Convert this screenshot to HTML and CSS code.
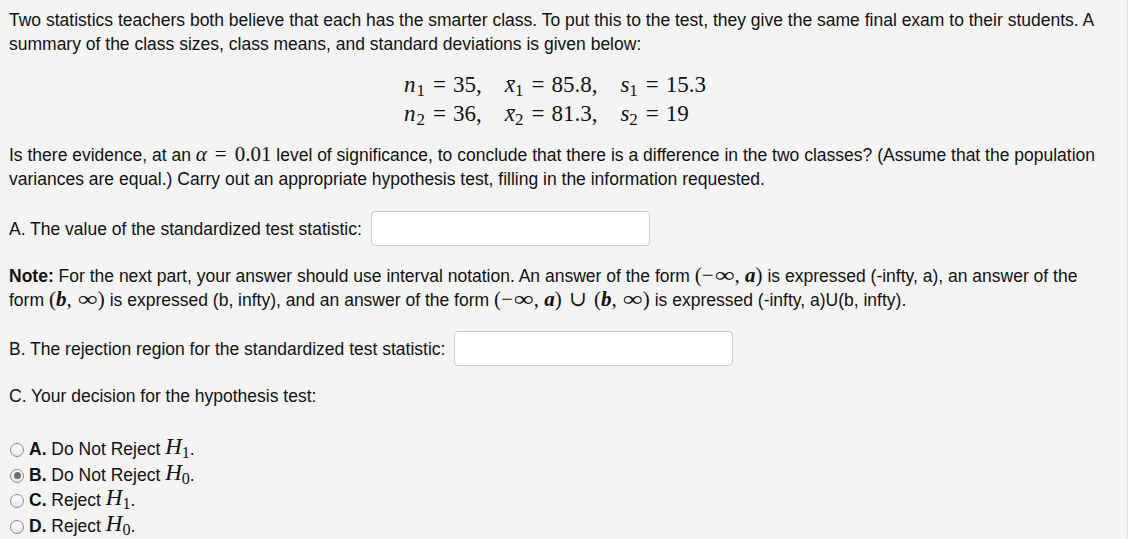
FILE: index.html
```html
<!DOCTYPE html>
<html>
<head>
<meta charset="utf-8">
<link rel="stylesheet" href="styles.css">
</head>
<body>
<div class="page">
  <p class="p1">Two statistics teachers both believe that each has the smarter class. To put this to the test, they give the same final exam to their students. A summary of the class sizes, class means, and standard deviations is given below:</p>
  <div class="display">
    <div class="block">
      <div class="mrow"><span class="mi n">n</span><sub>1</sub><span class="mo">=</span>35,<span class="sp"></span><span class="mi bar">x</span><sub>1</sub><span class="mo">=</span>85.8,<span class="sp"></span><span class="mi">s</span><sub>1</sub><span class="mo">=</span>15.3</div>
      <div class="mrow"><span class="mi n">n</span><sub>2</sub><span class="mo">=</span>36,<span class="sp"></span><span class="mi bar">x</span><sub>2</sub><span class="mo">=</span>81.3,<span class="sp"></span><span class="mi">s</span><sub>2</sub><span class="mo">=</span>19</div>
    </div>
  </div>
  <p class="p2">Is there evidence, at an <span class="m"><span class="mi">α</span><span class="mo">=</span>0.01</span> level of significance, to conclude that there is a difference in the two classes? (Assume that the population variances are equal.) Carry out an appropriate hypothesis test, filling in the information requested.</p>
  <div class="answer a-row">
    <span>A. The value of the standardized test statistic:</span>
    <span class="box"></span>
  </div>
  <p class="note"><b>Note:</b> For the next part, your answer should use interval notation. An answer of the form <span class="m">(−<span class="inf">∞</span>, <span class="mi b">a</span>)</span> is expressed (-infty, a), an answer of the form <span class="m">(<span class="mi b">b</span>, <span class="inf">∞</span>)</span> is expressed (b, infty), and an answer of the form <span class="m">(−<span class="inf">∞</span>, <span class="mi b">a</span>) <span class="cup">∪</span> (<span class="mi b">b</span>, <span class="inf">∞</span>)</span> is expressed (-infty, a)U(b, infty).</p>
  <div class="answer b-row">
    <span>B. The rejection region for the standardized test statistic:</span>
    <span class="box"></span>
  </div>
  <p class="c-row">C. Your decision for the hypothesis test:</p>
  <ul class="choices">
    <li><span class="radio"></span><b>A.</b>&nbsp;Do Not Reject <span class="m h"><span class="mi">H</span><sub>1</sub></span>.</li>
    <li><span class="radio on"></span><b>B.</b>&nbsp;Do Not Reject <span class="m h"><span class="mi">H</span><sub>0</sub></span>.</li>
    <li><span class="radio"></span><b>C.</b>&nbsp;Reject <span class="m h"><span class="mi">H</span><sub>1</sub></span>.</li>
    <li><span class="radio"></span><b>D.</b>&nbsp;Reject <span class="m h"><span class="mi">H</span><sub>0</sub></span>.</li>
  </ul>
</div>
</body>
</html>
```

FILE: styles.css
```css
html, body {
  margin: 0;
  padding: 0;
  background: #f4f4f4;
}
body {
  font-family: "Liberation Sans", Arial, sans-serif;
  font-size: 17.5px;
  color: #111;
  line-height: 24px;
}
.page {
  box-sizing: border-box;
  width: 1128px;
  height: 539px;
  padding: 8px 22px 0 9px;
  border-right: 1px solid #e2e2e2;
  overflow: hidden;
}
p { margin: 0; }
.display {
  margin-top: 14px;
  display: flex;
  justify-content: center;
  font-family: "Liberation Serif", "DejaVu Serif", serif;
  font-size: 23px;
}
.block {
  display: flex;
  flex-direction: column;
  align-items: flex-start;
  padding-right: 4px;
}
.mrow {
  height: 29px;
  line-height: 29px;
  white-space: nowrap;
}
.mi { font-style: italic; }
.mi.n { padding-right: 1px; }
.mi.b { font-style: italic; font-weight: bold; }
.bar { position: relative; }
.bar::before {
  content: "";
  position: absolute;
  left: 3px;
  right: 0;
  top: 8px;
  height: 1.3px;
  background: #111;
}
sub {
  font-size: 74%;
  vertical-align: -0.25em;
  line-height: 0;
  font-style: normal;
}
.mo { padding: 0 7px 0 8px; }
.sp { display: inline-block; width: 23px; }
.m {
  font-family: "Liberation Serif", "DejaVu Serif", serif;
  font-size: 21px;
  line-height: 0;
}
.m .mo { padding: 0 8px; }
.inf {
  display: inline-block;
  transform: scaleX(1.35);
  margin: 0 3px;
}
.cup { padding: 0 2px; }
.p2 { margin-top: 15px; }
.answer {
  display: flex;
  align-items: center;
  gap: 9px;
}
.a-row { margin-top: 20px; }
.box {
  display: inline-block;
  box-sizing: border-box;
  width: 279px;
  height: 35px;
  background: #fff;
  border: 1px solid #cccccc;
  border-radius: 4px;
}
.note { margin-top: 18px; }
.note .m { font-size: 21px; }
.b-row { margin-top: 19px; }
.c-row { margin-top: 18px; }
.choices {
  list-style: none;
  margin: 29px 0 0 0;
  padding: 0;
}
.choices li {
  height: 25.7px;
  line-height: 25.7px;
  display: flex;
  align-items: center;
  white-space: pre;
}
.choices b { font-weight: bold; }
.radio {
  box-sizing: border-box;
  width: 14px;
  height: 14px;
  border: 1px solid #8a8a8a;
  border-radius: 50%;
  background: linear-gradient(#ffffff, #e8e8e8);
  margin: 0 5px 0 1px;
  position: relative;
}
.radio.on::after {
  content: "";
  position: absolute;
  left: 2.5px;
  top: 2.5px;
  width: 7px;
  height: 7px;
  border-radius: 50%;
  background: #6e6e6e;
}
.h { font-size: 23px; }
.h sub { font-size: 70%; }
```
